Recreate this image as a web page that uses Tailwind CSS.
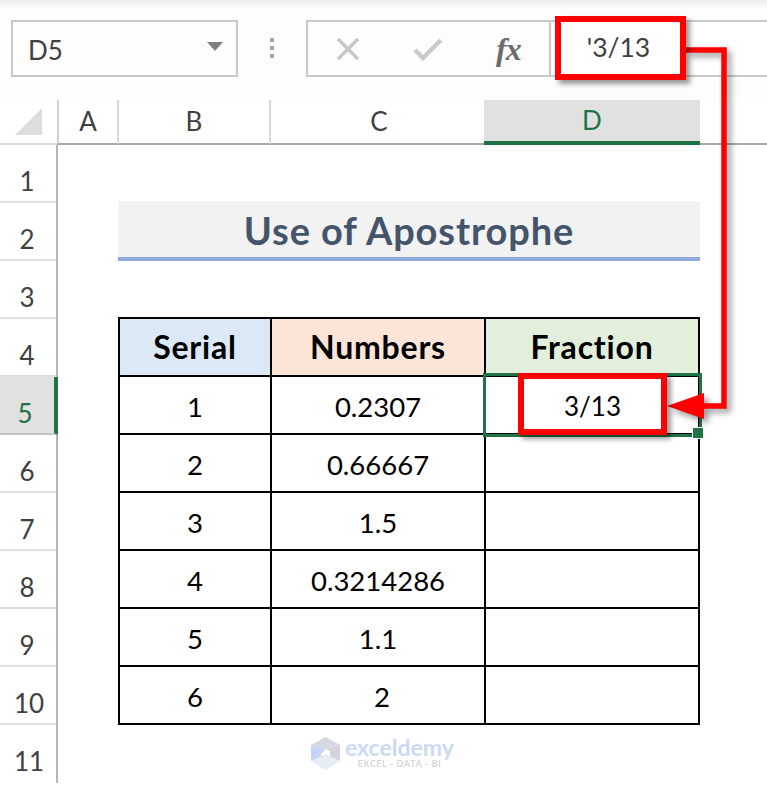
<!DOCTYPE html>
<html lang="en">
<head>
    <meta charset="UTF-8">
    <title>Use of Apostrophe</title>
    <script src="https://cdn.jsdelivr.net/npm/@tailwindcss/browser@4"></script>
</head>
<body class="bg-white">
<div class="relative w-[767px] h-[785px] overflow-hidden bg-white font-['Lato',sans-serif] text-[#404040]">

    <!-- Top strip -->
    <div class="h-[9px] bg-gradient-to-b from-[#ececec] to-white"></div>

    <!-- Formula bar -->
    <div class="flex h-[91px] pt-[11px] pl-[11px] bg-[#fdfdfd]">
        <div class="flex items-center justify-between w-[227px] h-[57px] border-2 border-[#c8c8c8] pl-[15px] pr-[13px] text-[26px]">
            <span class="pt-[3px]">D5</span>
            <svg class="w-4 h-[9px] mb-1" viewBox="0 0 16 9"><polygon points="0,0 16,0 8,9" fill="#7f7f7f"/></svg>
        </div>
        <div class="flex flex-col items-center justify-center gap-[4px] w-[68px] h-[57px] pb-[2px]">
            <div class="size-[4px] bg-[#a6a6a6]"></div>
            <div class="size-[4px] bg-[#a6a6a6]"></div>
            <div class="size-[4px] bg-[#a6a6a6]"></div>
        </div>
        <div class="flex items-center w-[245px] h-[57px] border-2 border-[#c8c8c8]">
            <svg class="w-[24px] h-[24px] ml-[28px]" viewBox="0 0 24 24"><path d="M2 2 L22 22 M22 2 L2 22" stroke="#c9c9c9" stroke-width="3.5" fill="none"/></svg>
            <svg class="w-[30px] h-[24px] ml-[53px]" viewBox="0 0 30 24"><path d="M2 13 L10 21 L28 3" stroke="#cbcbcb" stroke-width="4.5" fill="none"/></svg>
            <span class="ml-[53px] font-['Liberation_Serif',serif] italic font-bold text-[32px] tracking-[-1px] text-[#6b6b6b]">fx</span>
        </div>
        <div class="flex-1 h-[57px] border-y-2 border-[#c8c8c8] bg-white"></div>
    </div>

    <!-- Column headers -->
    <div class="flex h-[45px] text-[26px]">
        <div class="flex items-center justify-center w-[57px] border-b-2 border-[#d8d8d8]">
            <svg class="w-[27px] h-[27px]" viewBox="0 0 27 27"><polygon points="27,0 27,27 0,27" fill="#dddddd"/></svg>
        </div>
        <div class="flex items-center justify-center w-[62px] border-l-2 border-r-2 border-b-2 border-l-[#d0d0d0] border-r-[#d8d8d8] border-b-[#a8a8a8]">A</div>
        <div class="flex items-center justify-center w-[152px] border-r-2 border-b-2 border-r-[#d8d8d8] border-b-[#a8a8a8]">B</div>
        <div class="flex items-center justify-center w-[213px] pl-[3px] border-b-2 border-[#a8a8a8]">C</div>
        <div class="flex items-center justify-center w-[216px] bg-[#e1e1e1] border-b-[4px] border-[#217346] text-[#217346]">D</div>
        <div class="flex-1 border-b-2 border-[#a8a8a8]"></div>
    </div>

    <div class="flex">
        <!-- Row numbers -->
        <div class="w-[58px] border-r-2 border-[#b4b4b4] text-[26px] leading-none text-center">
            <div class="h-[58px] pt-[23px] pr-[2px] border-b-2 border-[#e0e0e0]">1</div>
            <div class="h-[58px] pt-[23px] pr-[2px] border-b-2 border-[#e0e0e0]">2</div>
            <div class="h-[58px] pt-[23px] pr-[2px] border-b-2 border-[#e0e0e0]">3</div>
            <div class="h-[58px] pt-[23px] pr-[2px] border-b-2 border-[#e0e0e0]">4</div>
            <div class="relative -mr-[2px] h-[58px] pt-[23px] pr-[4px] bg-[#e1e1e1] border-r-[4px] border-b-2 border-r-[#217346] border-b-[#c4c4c4] text-[#217346]">5</div>
            <div class="h-[58px] pt-[23px] pr-[2px] border-b-2 border-[#e0e0e0]">6</div>
            <div class="h-[58px] pt-[23px] pr-[2px] border-b-2 border-[#e0e0e0]">7</div>
            <div class="h-[58px] pt-[23px] pr-[2px] border-b-2 border-[#e0e0e0]">8</div>
            <div class="h-[58px] pt-[23px] pr-[2px] border-b-2 border-[#e0e0e0]">9</div>
            <div class="h-[58px] pt-[23px] pl-[2px] border-b-2 border-[#e0e0e0]">10</div>
            <div class="h-[58px] pt-[23px] pl-[2px]">11</div>
        </div>

        <!-- Sheet -->
        <div class="pl-[60px] pt-[56px]">
            <div class="flex items-center justify-center w-[582px] h-[60px] pt-[3px] bg-[#f2f2f2] border-b-[4px] border-[#8ea9db] font-bold text-[38px] tracking-[0.9px] text-[#44546a]">Use of Apostrophe</div>
            <table class="mt-[56px] border-collapse table-fixed text-[27.5px] text-center text-black">
                <tr class="h-[58px] font-bold text-[32px] tracking-[0.8px]">
                    <td class="w-[152px] border-2 border-black bg-[#dae9f5]">Serial</td>
                    <td class="w-[214px] border-2 border-black bg-[#fce4d6]">Numbers</td>
                    <td class="w-[214px] border-2 border-black bg-[#e2efda]">Fraction</td>
                </tr>
                <tr class="h-[58px]"><td class="pt-[3px] border-2 border-black">1</td><td class="pt-[3px] border-2 border-black">0.2307</td><td class="border-2 border-black"></td></tr>
                <tr class="h-[58px]"><td class="pt-[3px] border-2 border-black">2</td><td class="pt-[3px] border-2 border-black">0.66667</td><td class="border-2 border-black"></td></tr>
                <tr class="h-[58px]"><td class="pt-[3px] border-2 border-black">3</td><td class="pt-[3px] border-2 border-black">1.5</td><td class="border-2 border-black"></td></tr>
                <tr class="h-[58px]"><td class="pt-[3px] border-2 border-black">4</td><td class="pt-[3px] border-2 border-black">0.3214286</td><td class="border-2 border-black"></td></tr>
                <tr class="h-[58px]"><td class="pt-[3px] border-2 border-black">5</td><td class="pt-[3px] border-2 border-black">1.1</td><td class="border-2 border-black"></td></tr>
                <tr class="h-[58px]"><td class="pt-[3px] border-2 border-black">6</td><td class="pt-[3px] pl-[8px] border-2 border-black">2</td><td class="border-2 border-black"></td></tr>
            </table>
        </div>
    </div>

    <!-- Selected cell -->
    <div class="absolute left-[483px] top-[373px] w-[219px] h-[64px] border-[3px] border-[#217346]"></div>
    <div class="absolute left-[692px] top-[427px] size-[12px] bg-[#217346] border border-white"></div>

    <!-- Callouts -->
    <svg class="absolute left-0 top-0 w-[767px] h-[785px] drop-shadow-[4px_4px_3px_rgba(0,0,0,0.4)]" viewBox="0 0 767 785">
        <path d="M686 50 H724 V406 H690" stroke="#ff0000" stroke-width="5.5" fill="none"/>
        <polygon points="667,406 704,393 704,419" fill="#ff0000"/>
    </svg>
    <div class="absolute left-[555px] top-[16px] flex items-center justify-center w-[131px] h-[64px] border-[6px] border-[#ff0000] bg-white text-[26.5px] text-[#404040] pr-[4px] shadow-[4px_4px_5px_rgba(0,0,0,0.4)]">'3/13</div>
    <div class="absolute left-[518px] top-[373px] flex items-center justify-center w-[149px] h-[62px] pt-[5px] border-[6px] border-[#ff0000] bg-white text-[26px] text-black shadow-[4px_4px_5px_rgba(0,0,0,0.4)]">3/13</div>

    <!-- Watermark -->
    <div class="absolute left-[311px] top-[737px] flex items-start gap-[5px]">
        <svg class="w-[29px] h-[33px]" viewBox="0 0 29 33">
            <polygon points="14.5,0 29,8 14.5,12 0,8" fill="#d5d8de"/>
            <polygon points="0,8 14.5,12 10,17 10,22 0,24" fill="#c6d3f6"/>
            <polygon points="29,8 29,24 19,22 19,14 14.5,12" fill="#d3d5da"/>
            <polygon points="0,24 14.5,17 29,24 14.5,33" fill="#e6edf7"/>
        </svg>
        <div class="flex flex-col items-center">
            <span class="font-bold text-[23px] leading-[21px] text-[#cdd9f5]">exceldemy</span>
            <span class="font-bold text-[9px] leading-[11px] tracking-[0.6px] text-[#d6d6d6]">EXCEL - DATA - BI</span>
        </div>
    </div>
</div>
</body>
</html>
